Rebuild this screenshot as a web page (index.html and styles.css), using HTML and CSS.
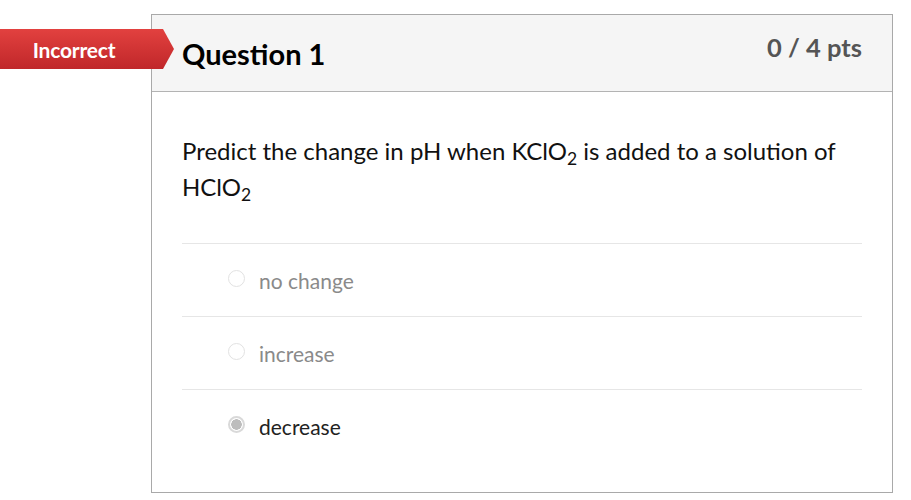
FILE: index.html
```html
<!DOCTYPE html>
<html>
<head>
<meta charset="utf-8">
<link rel="stylesheet" href="styles.css">
</head>
<body>
<div class="page">
  <div class="badge"><span>Incorrect</span></div>
  <div class="card">
    <div class="card-header">
      <h2 class="title">Question 1</h2>
      <div class="pts">0 / 4 pts</div>
    </div>
    <div class="card-body">
      <p class="qtext">Predict the change in pH when KClO<sub>2</sub> is added to a solution of HClO<sub>2</sub></p>
      <div class="answers">
        <div class="answer">
          <span class="radio"></span>
          <span class="label">no change</span>
        </div>
        <div class="answer">
          <span class="radio"></span>
          <span class="label">increase</span>
        </div>
        <div class="answer selected">
          <span class="radio"></span>
          <span class="label">decrease</span>
        </div>
      </div>
    </div>
  </div>
</div>
</body>
</html>
```
FILE: styles.css
```css
html, body {
  margin: 0;
  padding: 0;
  background: #ffffff;
  font-family: Lato, "Liberation Sans", sans-serif;
}
.page {
  position: relative;
  padding: 14px 0 0 151px;
}
.badge {
  position: absolute;
  left: 0;
  top: 29px;
  width: 174px;
  height: 40px;
  background: linear-gradient(#e2413f, #c0272a);
  clip-path: polygon(0 0, 163px 0, 174px 50%, 163px 100%, 0 100%);
  display: flex;
  align-items: center;
}
.badge span {
  width: 148px;
  text-align: center;
  color: #ffffff;
  font-weight: 700;
  font-size: 21px;
  letter-spacing: -0.2px;
}
.card {
  width: 740px;
  height: 477px;
  border: 1px solid #a9a9a9;
}
.card-header {
  height: 76px;
  background: #f5f5f5;
  border-bottom: 1px solid #b3b3b3;
  display: flex;
  justify-content: space-between;
  padding: 0 30px;
}
.title {
  margin: 22px 0 0 0;
  font-size: 29px;
  font-weight: 700;
  color: #000000;
  line-height: 34px;
}
.pts {
  margin-top: 16px;
  font-size: 25.5px;
  font-weight: 700;
  color: #555555;
  line-height: 32px;
}
.card-body {
  padding: 41px 30px 0 30px;
}
.qtext {
  margin: 0 0 38px 0;
  font-size: 24px;
  line-height: 36px;
  color: #111111;
}
.qtext sub {
  font-size: 17.5px;
  line-height: 1;
  vertical-align: -5px;
}
.answers {
  display: flex;
  flex-direction: column;
}
.answer {
  height: 72px;
  border-top: 1px solid #e6e6e6;
  display: flex;
  align-items: center;
  padding-left: 46px;
  gap: 14px;
}
.radio {
  width: 17px;
  height: 17px;
  border-radius: 50%;
  border: 1px solid #e2e2e2;
  box-sizing: border-box;
  margin-top: -4px;
  background: #fff;
}
.label {
  font-size: 21px;
  color: #8a8a8a;
}
.selected .label {
  color: #222222;
}
.selected .radio {
  border: 2px solid #d9d9d9;
  background: radial-gradient(circle, #bdbdbd 0 5px, #ffffff 5.5px);
}
```
